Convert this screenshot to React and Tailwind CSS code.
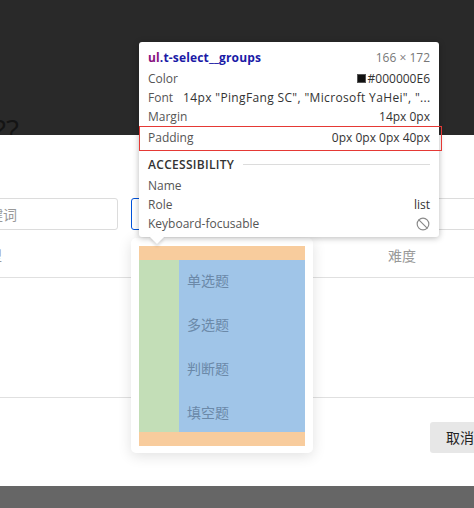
import React from "react";
import { Ban } from "lucide-react";

const cjk = { fontFamily: '"Noto Sans CJK SC", "Noto Sans", sans-serif' };
const ui = { fontFamily: '"Open Sans", "Noto Sans", sans-serif' };

function Row({ label, children, className = "" }) {
  return (
    <div className={"flex h-[19px] items-center justify-between " + className}>
      <span className="text-[#555]">{label}</span>
      <span className="text-[#333] whitespace-nowrap">{children}</span>
    </div>
  );
}

export default function App() {
  return (
    <div className="relative w-[474px] h-[508px] overflow-hidden bg-white" style={cjk}>
      {/* dark backdrop top */}
      <div className="h-[135px] bg-[#292929] overflow-hidden flex flex-col justify-end">
        <div className="-ml-[7px] -mb-[15px] text-[30px] leading-[40px] font-medium text-[#141414]" style={ui}>
          ??
        </div>
      </div>

      {/* modal body */}
      <div className="h-[351px] bg-white flex flex-col">
        <div className="mt-[63px] flex gap-[13px] h-[32px]">
          <div className="-ml-[34px] w-[152px] shrink-0 h-full rounded-[3px] border border-[#dcdcdc] flex items-center pl-[8px] text-[14px] text-[#999]">
            关键词
          </div>
          <div className="w-[180px] shrink-0 h-full rounded-[3px] border border-[#0052d9]" />
          <div className="w-[180px] shrink-0 h-full rounded-[3px] border border-[#dcdcdc] -ml-[4px]" />
        </div>
        <div className="mt-[4px] h-[44px] border-b border-[#e0e0e0] flex items-center text-[14px] text-[#999]">
          <span className="-ml-[26px] w-[28px]">题型</span>
          <span className="ml-[386px]">难度</span>
        </div>
        <div className="h-[120px] border-b border-[#e0e0e0]" />
        <div className="mt-[24px] flex">
          <div className="ml-[430px] w-[60px] shrink-0 h-[31px] rounded-[3px] bg-[#e7e7e7] flex items-center pl-[16px] text-[14px] text-[#222]">
            取消
          </div>
        </div>
      </div>

      {/* bottom backdrop */}
      <div className="h-[22px] bg-[#666666]" />

      {/* select dropdown panel (inspected element) */}
      <div className="absolute left-[131px] top-[238px] w-[182px] h-[215px] bg-white rounded-[5px] shadow-[0_3px_14px_rgba(0,0,0,0.12)] p-[8px]">
        <div className="h-[200px] bg-[#f8cc9d] py-[14px]">
          <div className="h-[172px] flex bg-[#c3deb7]">
            <div className="w-[40px] shrink-0" />
            <div className="flex-1 bg-[#a0c5e8] flex flex-col justify-between">
              {["单选题", "多选题", "判断题", "填空题"].map((t) => (
                <div key={t} className="h-[40px] flex items-center pl-[8px] text-[14px] text-[#6b89a8]">
                  {t}
                </div>
              ))}
            </div>
          </div>
        </div>
      </div>

      {/* devtools tooltip */}
      <div
        className="absolute left-[139px] top-[42px] w-[300px] h-[195px] bg-white rounded-[3px] shadow-[0_1px_6px_rgba(0,0,0,0.28)] px-[9px] pt-[6px] text-[12px] leading-[19px]"
        style={ui}
      >
        <div className="flex h-[19px] items-center justify-between">
          <span className="font-bold tracking-[0.15px]">
            <span className="text-[#881280]">ul</span>
            <span className="text-[#1a1aa6]">.t-select__groups</span>
          </span>
          <span className="text-[#777]">166 × 172</span>
        </div>
        <Row label="Color" className="mt-[2px]">
          <span className="inline-flex items-center">
            <span className="inline-block w-[9px] h-[9px] bg-[#111] border border-[#555] mr-[2px]" />
            #000000E6
          </span>
        </Row>
        <div className="flex h-[19px] items-center">
          <span className="text-[#555] shrink-0">Font</span>
          <span className="ml-[10px] flex-1 text-right text-[#333] whitespace-nowrap overflow-hidden tracking-[0.35px]">
            14px "PingFang SC", "Microsoft YaHei", "...
          </span>
        </div>
        <Row label="Margin" className="h-[18px]">14px 0px</Row>
        <div className="-ml-[9px] -mr-[12px] h-[25px] border border-[#e53935] flex items-center justify-between pl-[8px] pr-[11px] pb-[2px]">
          <span className="text-[#555]">Padding</span>
          <span className="text-[#333]">0px 0px 0px 40px</span>
        </div>
        <div className="mt-[3px] h-[20px] flex items-center">
          <span className="text-[#333] font-semibold tracking-[0.3px]">ACCESSIBILITY</span>
          <span className="flex-1 h-px bg-[#dcdcdc] ml-[9px]" />
        </div>
        <Row label="Name" className="mt-[2px]">{""}</Row>
        <Row label="Role">list</Row>
        <Row label="Keyboard-focusable">
          <Ban size={14} strokeWidth={2} className="text-[#8a8a8a]" />
        </Row>
      </div>

      {/* tooltip arrow */}
      <div className="absolute left-[152px] top-[232px] w-[10px] h-[10px] bg-white rotate-45 shadow-[2px_2px_3px_rgba(0,0,0,0.12)]" />
    </div>
  );
}
